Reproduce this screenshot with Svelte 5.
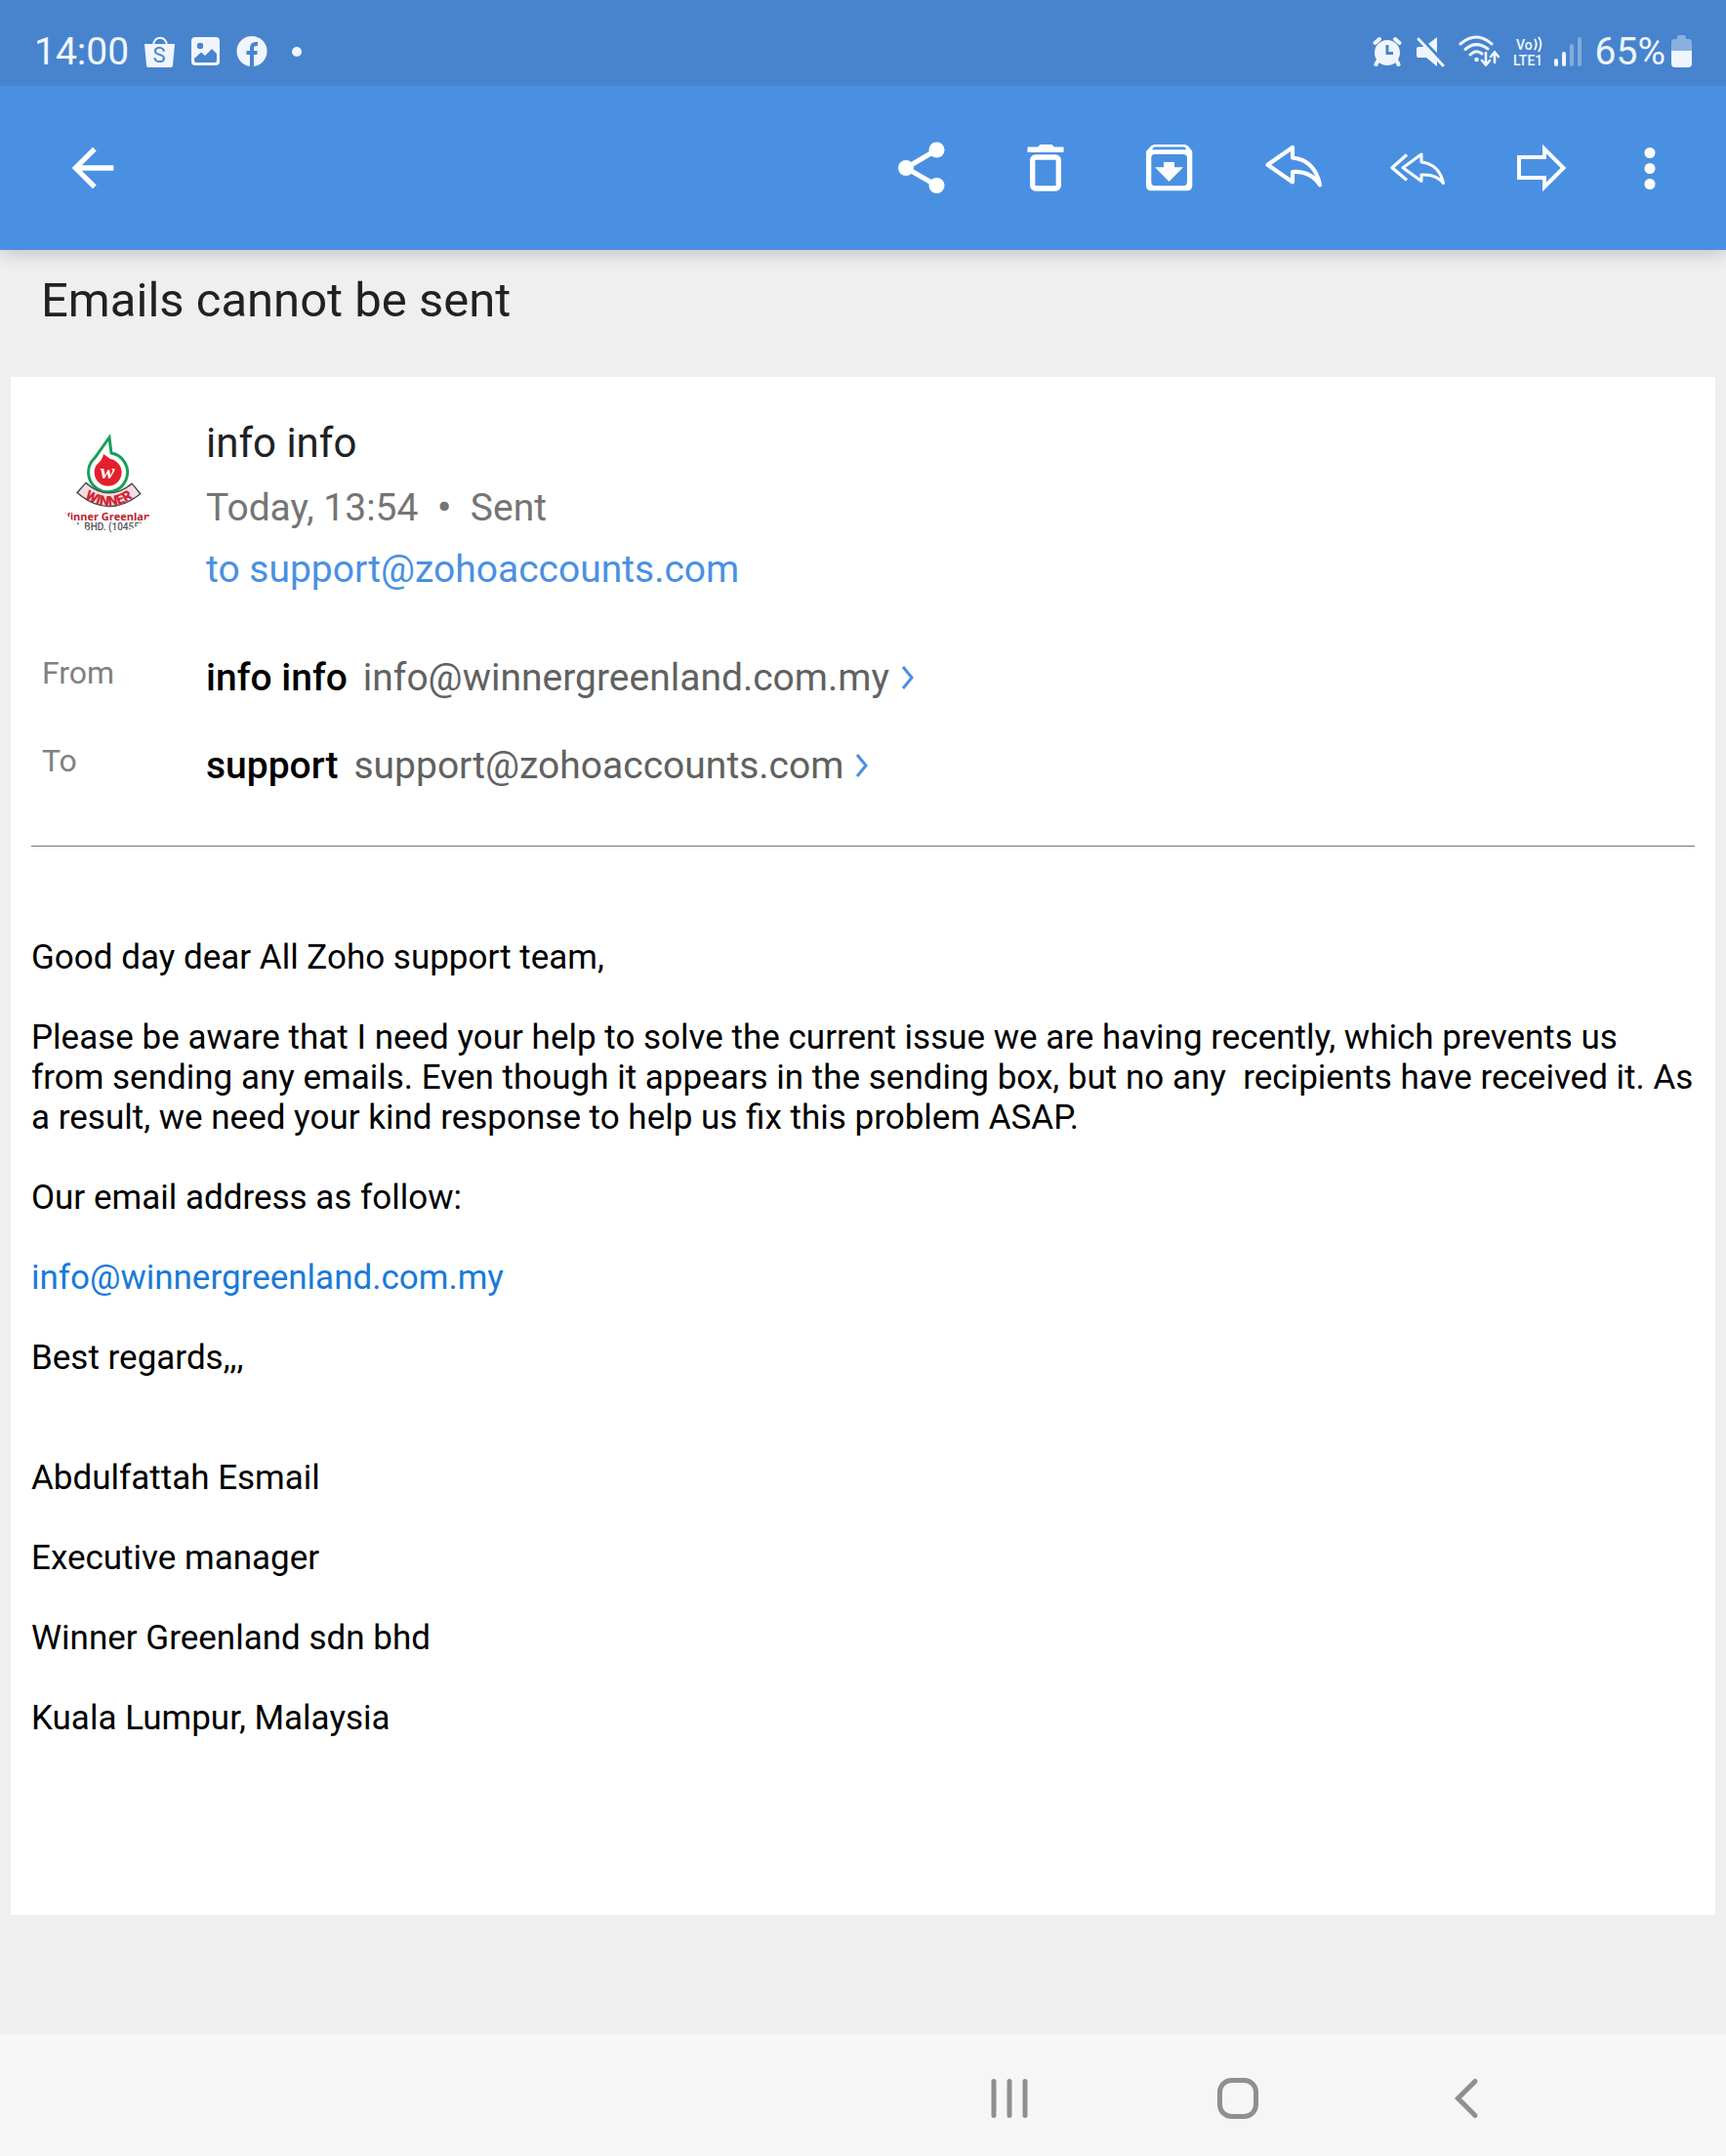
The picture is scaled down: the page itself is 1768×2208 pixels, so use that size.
<script>
	let subject = 'Emails cannot be sent';

	let rows = [
		{ label: 'From', name: 'info info', address: 'info@winnergreenland.com.my' },
		{ label: 'To', name: 'support', address: 'support@zohoaccounts.com' }
	];

	let signature = [
		'Abdulfattah Esmail',
		'Executive manager',
		'Winner Greenland sdn bhd',
		'Kuala Lumpur, Malaysia'
	];
</script>

<div class="screen">
	<div class="status">
		<span class="clock">14:00</span>
		<div class="notices">
			<svg width="32" height="36" viewBox="0 0 32 36">
				<path d="M9 12C9 1 23 1 23 12" fill="none" stroke="#f0f5fd" stroke-width="2" />
				<path d="M0 10H31L29 32Q29 34 27 34H4Q2 34 2 32Z" fill="#f0f5fd" />
				<text x="15" y="29" text-anchor="middle" font-size="22" fill="#4784cd">S</text>
			</svg>
			<svg width="30" height="36" viewBox="0 0 30 36">
				<rect x="0" y="3" width="29" height="29" rx="4" fill="#f0f5fd" />
				<circle cx="9" cy="12" r="3.2" fill="#4784cd" />
				<path d="M3 25L10 18.500L14 22L21 15L26 20V27Q26 29 24 29H5Q3 29 3 27Z" fill="#4784cd" />
			</svg>
			<svg width="32" height="36" viewBox="0 0 32 36">
				<circle cx="16" cy="17.500" r="15.500" fill="#f0f5fd" />
				<path d="M16 33.500V14Q16 9.500 22 10M10.500 19H21.500" fill="none" stroke="#4784cd" stroke-width="4" />
			</svg>
			<span class="dot"></span>
		</div>

		<div class="system">
			<svg width="30" height="32" viewBox="0 0 30 32">
				<circle cx="15" cy="17" r="13" fill="#f0f5fd" />
				<path d="M2.500 7L7 3M27.500 7L23 3M5 26L3.500 29M25 26L26.500 29" stroke="#f0f5fd" stroke-width="4" stroke-linecap="round" />
				<path d="M15 9V17.500H21" fill="none" stroke="#4784cd" stroke-width="3" />
			</svg>
			<svg width="30" height="32" viewBox="0 0 30 32">
				<path d="M13 8L22 1V17Z" fill="#f0f5fd" />
				<path d="M3 3L28 30" stroke="#4784cd" stroke-width="7" />
				<path d="M3 3L28 30" stroke="#f0f5fd" stroke-width="3" stroke-linecap="round" />
				<path d="M3 11H9L22 24V31L11 22H3Q1 22 1 20V13Q1 11 3 11Z" fill="#f0f5fd" />
			</svg>
			<svg width="42" height="34" viewBox="0 0 42 34">
				<g fill="none" stroke="#f0f5fd" stroke-width="3" stroke-linecap="round">
					<path d="M2 9Q18 -5 34 9M7 14.500Q18 5 30 14M12 20Q18 14 24 19" />
					<path d="M28 18V30M24 26L28 30.500L32 26M37 28V18M33 22L37 17.500L41 22" stroke-width="2.600" />
				</g>
				<circle cx="18.500" cy="25" r="2.300" fill="#f0f5fd" />
			</svg>
			<svg width="36" height="36" viewBox="0 0 36 36" fill="#f0f5fd" font-weight="500">
				<text x="3" y="16" font-size="14">Vo</text>
				<path d="M22 5Q25.500 10 22 16M26 3Q31 10 26 18" fill="none" stroke="#f0f5fd" stroke-width="2" />
				<text x="0" y="32" font-size="14">LTE1</text>
			</svg>
			<svg class="signal" width="28" height="32" viewBox="0 0 28 32" stroke="#f0f5fd" stroke-width="4" stroke-linecap="round">
				<path d="M2 25V29M10 18V29" />
				<path d="M18 10V29M26 3V29" opacity=".35" />
			</svg>
			<span class="percent">65%</span>
			<svg width="21" height="34" viewBox="0 0 21 34">
				<path d="M6 4V2Q6 0 8 0H13Q15 0 15 2V4H18Q21 4 21 8V16H0V8Q0 4 3 4Z" fill="#8ab0e0" />
				<path d="M0 16H21V29Q21 33 17 33H4Q0 33 0 29Z" fill="#f0f5fd" />
			</svg>
		</div>
	</div>

	<header class="toolbar">
		<button class="back" aria-label="Back">
			<svg class="icon" viewBox="0 0 24 24">
				<path d="M20 11H7.800l5.600-5.600L12 4l-8 8 8 8 1.400-1.400L7.800 13H20v-2z" fill="#fff" />
			</svg>
		</button>
		<button class="action" aria-label="Share">
			<svg class="icon" viewBox="0 0 64 64" fill="#fff">
				<path d="M47.500 13.500L16 32L47.500 50" fill="none" stroke="#fff" stroke-width="5" />
				<circle cx="47.500" cy="13.500" r="8" />
				<circle cx="16" cy="32" r="8" />
				<circle cx="47.500" cy="50" r="8" />
			</svg>
		</button>
		<button class="action" aria-label="Delete">
			<svg class="icon" viewBox="0 0 64 64">
				<path d="M13.500 10.500H24L26.500 8H38.500L41 10.500H50.500V16H13.500Z" fill="#fff" />
				<rect x="18.700" y="21" width="26.600" height="32" rx="3" fill="none" stroke="#fff" stroke-width="5.300" />
			</svg>
		</button>
		<button class="action" aria-label="Archive">
			<svg class="icon" viewBox="0 0 64 64" fill="#fff" fill-rule="evenodd">
				<path d="M16 8H48L51 9.500L55.300 15V50Q55.300 55.300 50 55.300H13Q8 55.300 8 50V15L13 9.500ZM16 10.500L14 13.200H49.500L47.500 10.500ZM17 18Q13.300 18 13.300 22V46Q13.300 50.300 17 50.300H46Q50 50.300 50 46V22Q50 18 46 18Z" />
				<path d="M26 26H37V31.300H46L31.500 46L17 31.300H26Z" />
			</svg>
		</button>
		<button class="action" aria-label="Reply">
			<svg class="icon" viewBox="0 0 64 64" fill="none" stroke="#fff" stroke-width="4.200" stroke-linejoin="round">
				<path d="M5.500 28.700L31 11V21.500Q54 24 59 49.500Q50 35 31 36V46.500Z" />
			</svg>
		</button>
		<button class="action" aria-label="Reply all">
			<svg class="icon" viewBox="0 0 64 64" fill="none" stroke="#fff" stroke-width="3" stroke-linejoin="round">
				<path d="M21 18.500L6 31.700L21 44.500" stroke-width="3.200" />
				<path d="M17 31.700L36 18V26Q54 28 58.500 47.500Q51 38 36 39V45.500Z" />
			</svg>
		</button>
		<button class="action" aria-label="Forward">
			<svg class="icon" viewBox="0 0 64 64" fill="none" stroke="#fff" stroke-width="4">
				<path d="M9 21H35V12.500L54.500 32L35 51.500V42H9Z" />
			</svg>
		</button>
		<button class="more" aria-label="More options">
			<svg class="icon" viewBox="0 0 64 64" fill="#fff">
				<circle cx="32" cy="16.500" r="5.500" />
				<circle cx="32" cy="32.500" r="5.500" />
				<circle cx="32" cy="48.500" r="5.500" />
			</svg>
		</button>
	</header>

	<main>
		<h1>{subject}</h1>

		<article class="card">
			<div class="sender">
				<svg class="avatar" viewBox="0 0 114 114" role="img" aria-label="Winner Greenland">
					<defs>
						<clipPath id="round"><circle cx="57" cy="57" r="56" /></clipPath>
						<path id="ribbon" d="M25 70Q57 98 90 70" />
					</defs>
					<g clip-path="url(#round)">
						<path d="M58 14L43 35A20 20 0 1 0 60 30Z" fill="#fff" stroke="#16a05a" stroke-width="3" />
						<path d="M52 31L59 36A14 14 0 1 1 45 42Q51 37 52 31Z" fill="#e3202b" />
						<text x="56" y="56" text-anchor="middle" font-family="Liberation Serif" font-style="italic" font-weight="700" font-size="22" fill="#fff">w</text>
						<path d="M29 65Q57 90 86 66" fill="none" stroke="#4a4a4e" stroke-width="15" stroke-linejoin="round" />
						<path d="M30 66Q57 89 85 67" fill="none" stroke="#f4dedf" stroke-width="12" />
						<text font-size="14" font-weight="900" fill="#cf2734"><textPath href="#ribbon" startOffset="50%" text-anchor="middle">WINNER</textPath></text>
						<text x="7" y="99" font-family="Open Sans" font-size="11" font-weight="700" fill="#b8232f">Winner Greenland</text>
						<text x="20" y="109" font-size="10" font-weight="500" fill="#55555a">N. BHD. (1045573)</text>
					</g>
				</svg>
				<div class="meta">
					<span class="name">info info</span>
					<span class="time">Today, 13:54 <b>•</b> Sent</span>
					<a class="to" href="mailto:support@zohoaccounts.com">to support@zohoaccounts.com</a>
				</div>
			</div>

			<dl>
				{#each rows as row}
					<div class="row">
						<dt>{row.label}</dt>
						<dd>
							<strong>{row.name}</strong>
							<span>{row.address}</span>
							<svg width="14" height="24" viewBox="0 0 14 24" fill="none" stroke="#4a90e2" stroke-width="3">
								<path d="M2 1L11 12L2 23" />
							</svg>
						</dd>
					</div>
				{/each}
			</dl>

			<div class="body">
				<p>Good day dear All Zoho support team,</p>
				<p>
					Please be aware that I need your help to solve the current issue we are having recently,
					which prevents us from sending any emails. Even though it appears in the sending box, but
					no any&nbsp; recipients have received it. As a result, we need your kind response to help us
					fix this problem ASAP.
				</p>
				<p>Our email address as follow:</p>
				<p><a href="mailto:info@winnergreenland.com.my">info@winnergreenland.com.my</a></p>
				<p>Best regards,,,</p>
				<div class="signature">
					{#each signature as line}
						<p>{line}</p>
					{/each}
				</div>
			</div>
		</article>
	</main>

	<nav>
		<button aria-label="Recent apps">
			<svg width="44" height="44" viewBox="0 0 44 44" stroke="#8f8f8f" stroke-width="5" stroke-linecap="round">
				<path d="M6 4.500V39.500M22 4.500V39.500M38 4.500V39.500" />
			</svg>
		</button>
		<button aria-label="Home">
			<svg width="44" height="44" viewBox="0 0 44 44" fill="none" stroke="#8f8f8f" stroke-width="5">
				<rect x="3.500" y="3.500" width="37" height="37" rx="12" />
			</svg>
		</button>
		<button aria-label="Back">
			<svg width="44" height="44" viewBox="0 0 44 44" fill="none" stroke="#8f8f8f" stroke-width="5" stroke-linecap="round">
				<path d="M31 4.500L13.500 22L31 39.500" />
			</svg>
		</button>
	</nav>
</div>

<style>
	:global(body) {
		margin: 0;
		background: #efefef;
	}
	.screen {
		min-height: 100vh;
		display: flex;
		flex-direction: column;
		font-family: Roboto, sans-serif;
		color: #000;
	}
	svg {
		display: block;
		flex: none;
	}
	button {
		padding: 0;
		border: none;
		background: none;
		display: flex;
		align-items: center;
		justify-content: center;
		cursor: pointer;
	}

	.status {
		box-sizing: border-box;
		height: 88px;
		padding: 18px 35px 0;
		display: flex;
		align-items: center;
		background: #4784cd;
		color: #f0f5fd;
		font-size: 39px;
		line-height: 46px;
	}
	.notices {
		display: flex;
		align-items: center;
		gap: 16px;
		margin-left: 16px;
	}
	.dot {
		width: 10px;
		height: 10px;
		margin-left: 9px;
		border-radius: 50%;
		background: #f0f5fd;
	}
	.system {
		display: flex;
		align-items: center;
		gap: 14px;
		margin-left: auto;
	}
	.signal {
		margin-left: -8px;
	}
	.percent {
		margin-right: -8px;
	}

	.toolbar {
		position: relative;
		height: 168px;
		padding: 0 30px;
		display: flex;
		align-items: stretch;
		background: #4a90e2;
		box-shadow: 0 3px 18px rgba(0, 0, 0, 0.2);
		clip-path: inset(0 0 -30px 0);
	}
	.icon {
		width: 64px;
		height: 64px;
	}
	.back {
		width: 130px;
		margin-right: auto;
	}
	.action {
		width: 127px;
	}
	.more {
		width: 96px;
	}

	main {
		flex: 1;
		padding: 0 11px 122px;
	}
	h1 {
		margin: 0;
		padding: 24px 31px 50px;
		font-size: 49px;
		line-height: 56px;
		font-weight: 400;
		color: #212121;
	}
	.card {
		padding: 43px 21px 181px;
		background: #fff;
	}
	.sender {
		display: flex;
		padding-left: 22px;
	}
	.avatar {
		width: 114px;
		height: 114px;
		margin: 5px 43px 0 0;
	}
	.meta {
		display: flex;
		flex-direction: column;
		align-items: flex-start;
		gap: 19px;
		font-size: 39px;
		line-height: 44px;
	}
	.name {
		font-size: 42px;
		line-height: 50px;
		color: #212121;
	}
	.time {
		color: #757575;
	}
	.time b {
		margin: 0 10px;
	}
	.to {
		color: #4a90e2;
		text-decoration: none;
	}

	dl {
		margin: 65px 0 0;
		padding: 0 0 60px 11px;
		display: flex;
		flex-direction: column;
		gap: 44px;
	}
	.row {
		display: flex;
	}
	dt {
		width: 168px;
		font-size: 32px;
		line-height: 38px;
		color: #808080;
	}
	dd {
		margin: 0;
		padding-top: 2px;
		display: flex;
		align-items: center;
		font-size: 39px;
		line-height: 44px;
		color: #616161;
	}
	dd strong {
		margin-right: 16px;
		font-weight: 500;
		color: #000;
	}
	dd svg {
		margin-left: 12px;
	}

	.body {
		padding-top: 93px;
		border-top: 1px solid #757575;
		font-size: 35px;
		line-height: 41px;
	}
	.body p {
		margin: 0 0 41px;
	}
	.body a {
		color: #1a7ad9;
		text-decoration: none;
	}
	.signature {
		padding-top: 41px;
	}
	.signature p:last-child {
		margin-bottom: 0;
	}

	nav {
		box-sizing: border-box;
		height: 126px;
		padding: 6px 149px 0 0;
		display: flex;
		justify-content: flex-end;
		background: #f6f6f6;
	}
	nav button {
		width: 234px;
	}
</style>
